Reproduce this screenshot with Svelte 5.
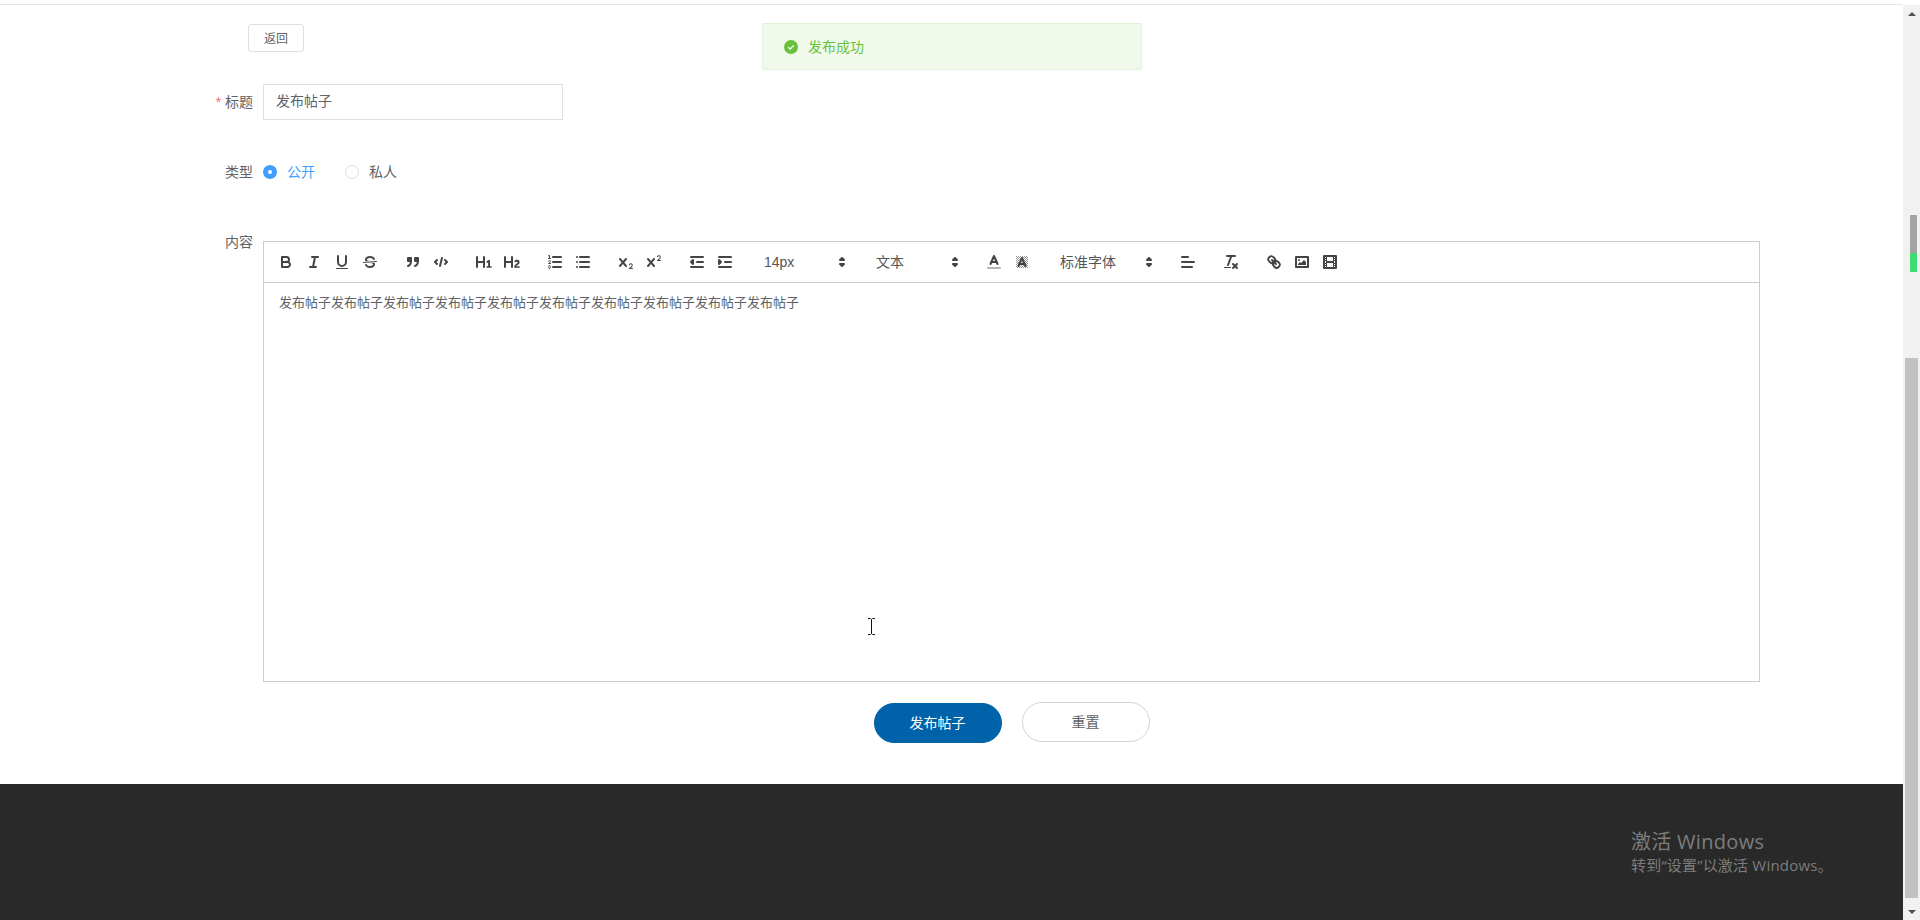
<script lang="ts">
  let title = $state('发布帖子');
  let kind = $state('public');
  const body = '发布帖子'.repeat(10);
  const dots: number[][] = [];
  for (let y = 3; y < 15; y++) {
    for (let x = 3; x < 15; x++) {
      if ((x + y) % 2 === 0) dots.push([x, y]);
    }
  }
</script>

{#snippet arrows()}
  <svg class="arrows" viewBox="0 0 18 18" aria-hidden="true">
    <polygon class="s f" points="7 11 9 13 11 11 7 11" />
    <polygon class="s f" points="7 7 9 5 11 7 7 7" />
  </svg>
{/snippet}

<div class="page">
  <div class="main">
    <div class="topline"></div>

    <form class="form">
      <button class="back" type="button"><span class="lift">返回</span></button>

      <div class="row">
        <span class="label"><i>*</i> 标题</span>
        <input class="title" bind:value={title} />
      </div>

      <div class="row">
        <span class="label">类型</span>
        <div class="radios">
          <button type="button" class="radio" class:on={kind === 'public'} onclick={() => (kind = 'public')}>
            <span class="dot"></span>公开
          </button>
          <button type="button" class="radio" class:on={kind === 'private'} onclick={() => (kind = 'private')}>
            <span class="dot"></span>私人
          </button>
        </div>
      </div>

      <div class="row content">
        <span class="label">内容</span>
        <div class="col">
          <div class="editor">
            <div class="toolbar">
              <div class="group">
                <span class="ic"><svg viewBox="0 0 18 18"><path class="s" d="M5,4H9.5A2.5,2.5,0,0,1,12,6.5v0A2.5,2.5,0,0,1,9.5,9H5A0,0,0,0,1,5,9V4A0,0,0,0,1,5,4Z" /><path class="s" d="M5,9h5.5A2.5,2.5,0,0,1,13,11.5v0A2.5,2.5,0,0,1,10.5,14H5a0,0,0,0,1,0,0V9A0,0,0,0,1,5,9Z" /></svg></span>
                <span class="ic"><svg viewBox="0 0 18 18"><line class="s" x1="7" x2="13" y1="4" y2="4" /><line class="s" x1="5" x2="11" y1="14" y2="14" /><line class="s" x1="8" x2="10" y1="14" y2="4" /></svg></span>
                <span class="ic"><svg viewBox="0 0 18 18"><path class="s" d="M5,3V9a4.012,4.012,0,0,0,4,4H9a4.012,4.012,0,0,0,4-4V3" /><rect class="f" height="1" rx="0.5" ry="0.5" width="12" x="3" y="15" /></svg></span>
                <span class="ic"><svg viewBox="0 0 18 18"><line class="s t" x1="15.5" x2="2.5" y1="8.5" y2="9.5" /><path class="f" d="M9.007,8C6.542,7.791,6,7.519,6,6.5,6,5.792,7.283,5,9,5c1.571,0,2.765.679,2.969,1.309a1,1,0,0,0,1.9-.617C13.356,4.106,11.354,3,9,3,6.2,3,4,4.538,4,6.5a3.2,3.2,0,0,0,.5,1.843Z" /><path class="f" d="M8.984,10C11.457,10.208,12,10.479,12,11.5c0,.708-1.283,1.5-3,1.5-1.571,0-2.765-.679-2.969-1.309a1,1,0,1,0-1.9.617C4.644,13.894,6.646,15,9,15c2.8,0,5-1.538,5-3.5a3.2,3.2,0,0,0-.5-1.843Z" /></svg></span>
              </div>
              <div class="group">
                <span class="ic"><svg viewBox="0 0 18 18"><rect class="s f" height="3" width="3" x="4" y="5" /><rect class="s f" height="3" width="3" x="11" y="5" /><path class="s" d="M7,8c0,4.031-3,5-3,5" /><path class="s" d="M14,8c0,4.031-3,5-3,5" /></svg></span>
                <span class="ic"><svg viewBox="0 0 18 18"><polyline class="s" points="5 7 3 9 5 11" /><polyline class="s" points="13 7 15 9 13 11" /><line class="s" x1="10" x2="8" y1="5" y2="13" /></svg></span>
              </div>
              <div class="group">
                <span class="ic"><svg viewBox="0 0 18 18"><path class="f" d="M10,4V14a1,1,0,0,1-2,0V10H3v4a1,1,0,0,1-2,0V4A1,1,0,0,1,3,4V8H8V4a1,1,0,0,1,2,0Zm6.06787,9.209H14.98975V7.59863a.54085.54085,0,0,0-.605-.60547h-.62744a1.01119,1.01119,0,0,0-.748.29688L11.645,8.56641a.5435.5435,0,0,0-.022.8584l.28613.30762a.53861.53861,0,0,0,.84717.0332l.09912-.08789a1.2137,1.2137,0,0,0,.2417-.35254h.02246s-.01123.30859-.01123.60547V13.209H12.041a.54085.54085,0,0,0-.605.60547v.43945a.54085.54085,0,0,0,.605.60547h4.02686a.54085.54085,0,0,0,.605-.60547v-.43945A.54085.54085,0,0,0,16.06787,13.209Z" /></svg></span>
                <span class="ic"><svg viewBox="0 0 18 18"><path class="f" d="M16.73975,13.81445v.43945a.54085.54085,0,0,1-.605.60547H11.855a.58392.58392,0,0,1-.64893-.60547V14.0127c0-2.90527,3.39941-3.42187,3.39941-4.55469a.77675.77675,0,0,0-.84717-.78125,1.17684,1.17684,0,0,0-.83594.38477c-.2749.26367-.561.374-.85791.13184l-.4292-.34082c-.30811-.24219-.38525-.51758-.1543-.81445a2.97155,2.97155,0,0,1,2.45361-1.17676,2.45393,2.45393,0,0,1,2.68408,2.40918c0,2.45312-3.1792,2.92676-3.27832,3.93848h2.79443A.54085.54085,0,0,1,16.73975,13.81445ZM9,3A.99974.99974,0,0,0,8,4V8H3V4A1,1,0,0,0,1,4V14a1,1,0,0,0,2,0V10H8v4a1,1,0,0,0,2,0V4A.99974.99974,0,0,0,9,3Z" /></svg></span>
              </div>
              <div class="group">
                <span class="ic"><svg viewBox="0 0 18 18"><line class="s" x1="7" x2="15" y1="4" y2="4" /><line class="s" x1="7" x2="15" y1="9" y2="9" /><line class="s" x1="7" x2="15" y1="14" y2="14" /><line class="s t" x1="2.5" x2="4.5" y1="5.5" y2="5.5" /><path class="f" d="M3.5,6A0.5,0.5,0,0,1,3,5.5V3.085l-0.276.138A0.5,0.5,0,0,1,2.053,3c-0.124-.247-0.023-0.324.224-0.447l1-.5A0.5,0.5,0,0,1,4,2.5v3A0.5,0.5,0,0,1,3.5,6Z" /><path class="s t" d="M4.5,10.5h-2c0-.234,1.85-1.076,1.85-2.234A0.959,0.959,0,0,0,2.5,8.156" /><path class="s t" d="M2.5,14.846a0.959,0.959,0,0,0,1.85-.109A0.7,0.7,0,0,0,3.75,14a0.688,0.688,0,0,0,.6-0.736,0.959,0.959,0,0,0-1.85-.109" /></svg></span>
                <span class="ic"><svg viewBox="0 0 18 18"><line class="s" x1="6" x2="15" y1="4" y2="4" /><line class="s" x1="6" x2="15" y1="9" y2="9" /><line class="s" x1="6" x2="15" y1="14" y2="14" /><line class="s" x1="3" x2="3" y1="4" y2="4" /><line class="s" x1="3" x2="3" y1="9" y2="9" /><line class="s" x1="3" x2="3" y1="14" y2="14" /></svg></span>
              </div>
              <div class="group">
                <span class="ic"><svg viewBox="0 0 18 18"><path class="f" d="M15.5,15H13.861a3.858,3.858,0,0,0,1.914-2.975,1.8,1.8,0,0,0-1.6-1.751A1.921,1.921,0,0,0,12.021,11.7a0.50013,0.50013,0,1,0,.957.291h0a0.914,0.914,0,0,1,1.053-.725,0.81,0.81,0,0,1,.744.762c0,1.076-1.16971,1.86982-1.93971,2.43082A1.45639,1.45639,0,0,0,12,15.5a0.5,0.5,0,0,0,.5.5h3A0.5,0.5,0,0,0,15.5,15Z" /><path class="f" d="M9.65,5.241a1,1,0,0,0-1.409.108L6,7.964,3.759,5.349A1,1,0,0,0,2.192,6.59178Q2.2,6.6,2.241,6.651L4.684,9.5,2.241,12.35A1,1,0,0,0,3.71,13.70722q0.04882-.04.09-0.08752L6,11.036,8.241,13.65a1,1,0,1,0,1.567-1.24277Q9.8,12.4,9.759,12.35L7.316,9.5,9.759,6.651A1,1,0,0,0,9.65,5.241Z" /></svg></span>
                <span class="ic"><svg viewBox="0 0 18 18"><path class="f" d="M15.5,7H13.861a4.015,4.015,0,0,0,1.914-2.975,1.8,1.8,0,0,0-1.6-1.751A1.922,1.922,0,0,0,12.021,3.7a0.5,0.5,0,1,0,.957.291,0.917,0.917,0,0,1,1.053-.725,0.81,0.81,0,0,1,.744.762c0,1.077-1.164,1.925-1.934,2.486A1.423,1.423,0,0,0,12,7.5a0.5,0.5,0,0,0,.5.5h3A0.5,0.5,0,0,0,15.5,7Z" /><path class="f" d="M9.651,5.241a1,1,0,0,0-1.41.108L6,7.964,3.759,5.349a1,1,0,1,0-1.519,1.3L4.683,9.5,2.241,12.35a1,1,0,1,0,1.519,1.3L6,11.036,8.241,13.65a1,1,0,0,0,1.519-1.3L7.317,9.5,9.759,6.651A1,1,0,0,0,9.651,5.241Z" /></svg></span>
              </div>
              <div class="group">
                <span class="ic"><svg viewBox="0 0 18 18"><line class="s" x1="3" x2="15" y1="14" y2="14" /><line class="s" x1="3" x2="15" y1="4" y2="4" /><line class="s" x1="9" x2="15" y1="9" y2="9" /><polyline class="s f" points="5 7 5 11 3 9 5 7" /></svg></span>
                <span class="ic"><svg viewBox="0 0 18 18"><line class="s" x1="3" x2="15" y1="14" y2="14" /><line class="s" x1="3" x2="15" y1="4" y2="4" /><line class="s" x1="9" x2="15" y1="9" y2="9" /><polyline class="s f" points="3 7 3 11 5 9 3 7" /></svg></span>
              </div>
              <div class="picker num">14px{@render arrows()}</div>
              <div class="picker">文本{@render arrows()}</div>
              <div class="group">
                <span class="ic"><svg viewBox="0 0 18 18"><line class="s faint" x1="3" x2="15" y1="15" y2="15" /><polyline class="s" points="5.5 11 9 3 12.5 11" /><line class="s" x1="11.63" x2="6.38" y1="9" y2="9" /></svg></span>
                <span class="ic"><svg viewBox="0 0 18 18"><g class="hatch">{#each dots as d}<rect class="f" x={d[0]} y={d[1]} width="1" height="1" />{/each}</g><polyline class="s" points="5.5 13 9 5 12.5 13" /><line class="s" x1="11.63" x2="6.38" y1="11" y2="11" /></svg></span>
              </div>
              <div class="picker wide">标准字体{@render arrows()}</div>
              <div class="group">
                <span class="ic"><svg viewBox="0 0 18 18"><line class="s" x1="3" x2="15" y1="9" y2="9" /><line class="s" x1="3" x2="13" y1="14" y2="14" /><line class="s" x1="3" x2="9" y1="4" y2="4" /></svg></span>
              </div>
              <div class="group">
                <span class="ic"><svg viewBox="0 0 18 18"><line class="s" x1="5" x2="13" y1="3" y2="3" /><line class="s" x1="6" x2="9.35" y1="12" y2="3" /><line class="s" x1="11" x2="15" y1="11" y2="15" /><line class="s" x1="15" x2="11" y1="11" y2="15" /><rect class="f" height="1" rx="0.5" ry="0.5" width="7" x="2" y="14" /></svg></span>
              </div>
              <div class="group">
                <span class="ic"><svg viewBox="0 0 18 18"><line class="s" x1="7" x2="11" y1="7" y2="11" /><path class="s" d="M8.9,4.577a3.476,3.476,0,0,1,.36,4.679A3.476,3.476,0,0,1,4.577,8.9C3.185,7.5,2.035,6.4,4.217,4.217S7.5,3.185,8.9,4.577Z" /><path class="s" d="M13.423,9.1a3.476,3.476,0,0,0-4.679-.36,3.476,3.476,0,0,0,.36,4.679c1.392,1.392,2.5,2.542,4.679.36S14.815,10.5,13.423,9.1Z" /></svg></span>
                <span class="ic"><svg viewBox="0 0 18 18"><rect class="s" height="10" width="12" x="3" y="4" /><circle class="f" cx="6" cy="7" r="1" /><polyline class="f" points="5 12 5 11 7 9 8 10 11 7 13 9 13 12 5 12" /></svg></span>
                <span class="ic"><svg viewBox="0 0 18 18"><rect class="s" height="12" width="12" x="3" y="3" /><rect class="f" height="12" width="1" x="5" y="3" /><rect class="f" height="12" width="1" x="12" y="3" /><rect class="f" height="2" width="8" x="5" y="8" /><rect class="f" height="1" width="3" x="3" y="5" /><rect class="f" height="1" width="3" x="3" y="7" /><rect class="f" height="1" width="3" x="3" y="10" /><rect class="f" height="1" width="3" x="3" y="12" /><rect class="f" height="1" width="3" x="12" y="5" /><rect class="f" height="1" width="3" x="12" y="7" /><rect class="f" height="1" width="3" x="12" y="10" /><rect class="f" height="1" width="3" x="12" y="12" /></svg></span>
              </div>
            </div>
            <div class="text">{body}</div>
          </div>

          <div class="actions">
            <button class="pill primary" type="button">发布帖子</button>
            <button class="pill plain" type="button">重置</button>
          </div>
        </div>
      </div>
    </form>

    <footer class="footer">
      <div class="activate">
        <div class="a1">激活 Windows</div>
        <div class="a2">转到“设置”以激活 Windows。</div>
      </div>
    </footer>
  </div>

  <aside class="scrollbar">
    <div class="sb-btn"><span class="up"></span></div>
    <div class="sb-track"><div class="sb-thumb"></div></div>
    <div class="sb-btn"><span class="down"></span></div>
    <div class="meter"></div>
  </aside>

  <div class="toast">
    <svg viewBox="0 0 16 16" width="16" height="16" aria-hidden="true">
      <circle cx="8" cy="8" r="7" fill="#67c23a" />
      <polyline points="5.2 8.2 7.2 10 10.800 6.400" fill="none" stroke="#fff" stroke-width="1.3" />
    </svg>
    <span class="lift">发布成功</span>
  </div>

  <svg class="cursor" viewBox="0 0 9 17" width="9" height="17" aria-hidden="true">
    <path d="M1 .5h2.500L4.500 1.500 5.500 .5H8M4.500 1.500v14M1 16.500h2.500l1-1 1 1H8" fill="none" stroke="#111" stroke-width="1" />
  </svg>
</div>

<style>
  :global(body) {
    margin: 0;
    background: #fff;
  }

  .page {
    position: relative;
    display: flex;
    height: 920px;
    overflow: hidden;
    color: #606266;
    font-family: "Liberation Sans", "Noto Sans CJK SC", sans-serif;
    font-size: 14px;
  }

  .main {
    flex: 1;
    min-width: 0;
    display: flex;
    flex-direction: column;
  }

  .topline {
    height: 4px;
    border-bottom: 1px solid #e4e4e4;
  }

  .form {
    flex: 1;
    padding: 19px 143px 0 200px;
  }

  button,
  input {
    font: inherit;
    color: inherit;
  }

  .lift {
    display: block;
    padding-bottom: 2px;
  }

  .back {
    display: block;
    width: 56px;
    height: 28px;
    margin-left: 48px;
    padding: 0;
    background: #fff;
    border: 1px solid #dcdfe6;
    border-radius: 3px;
    font-size: 12px;
    cursor: pointer;
  }

  .row {
    display: flex;
    margin-top: 32px;
    height: 36px;
    line-height: 36px;
  }

  .row + .row {
    margin-top: 34px;
  }

  .label {
    flex: 0 0 53px;
    margin-right: 10px;
    text-align: right;
    white-space: nowrap;
  }

  .label i {
    color: #f56c6c;
    font-style: normal;
  }

  .title {
    box-sizing: border-box;
    width: 300px;
    height: 36px;
    padding: 0 12px 2px;
    border: 1px solid #dcdfe6;
    outline: none;
  }

  .radios {
    display: flex;
    gap: 30px;
  }

  .radio {
    display: flex;
    align-items: center;
    gap: 10px;
    padding: 0;
    background: none;
    border: 0;
    cursor: pointer;
  }

  .dot {
    box-sizing: border-box;
    width: 14px;
    height: 14px;
    border: 1px solid #dcdfe6;
    border-radius: 50%;
    background: #fff;
  }

  .radio.on {
    color: #409eff;
  }

  .radio.on .dot {
    border: 5px solid #409eff;
  }

  .col {
    flex: 1;
    min-width: 0;
    padding-top: 17px;
  }

  .editor {
    box-sizing: border-box;
    height: 441px;
    border: 1px solid #ccc;
    line-height: 1.42;
  }

  .toolbar {
    box-sizing: border-box;
    display: flex;
    gap: 15px;
    height: 41px;
    padding: 8px;
    border-bottom: 1px solid #ccc;
    color: #555;
  }

  .group {
    display: flex;
  }

  .ic {
    display: block;
    box-sizing: border-box;
    width: 28px;
    height: 24px;
    padding: 3px 5px;
  }

  .ic svg {
    display: block;
    width: 18px;
    height: 18px;
  }

  .s {
    fill: none;
    stroke: #444;
    stroke-width: 2;
    stroke-linecap: round;
    stroke-linejoin: round;
  }

  .f {
    fill: #444;
  }

  .s.f {
    fill: #444;
  }

  .t {
    stroke-width: 1;
  }

  .faint {
    opacity: 0.4;
  }

  .hatch {
    opacity: 0.55;
  }

  .picker {
    position: relative;
    box-sizing: border-box;
    width: 98px;
    height: 24px;
    padding-left: 9px;
    font-size: 14px;
    line-height: 24px;
  }

  .picker.num {
    padding-left: 10px;
  }

  .picker.wide {
    width: 108px;
  }

  .arrows {
    position: absolute;
    top: 3px;
    right: 1px;
    width: 18px;
    height: 18px;
  }

  .text {
    padding: 11px 15px;
    font-size: 13px;
  }

  .actions {
    display: flex;
    justify-content: center;
    align-items: flex-start;
    gap: 20px;
    margin-top: 20px;
  }

  .pill {
    box-sizing: border-box;
    width: 128px;
    height: 40px;
    padding: 0;
    border-radius: 20px;
    cursor: pointer;
  }

  .primary {
    margin-top: 1px;
    background: #0062a8;
    border: 1px solid #0062a8;
    color: #fff;
  }

  .plain {
    background: #fff;
    border: 1px solid #d4d4d4;
  }

  .footer {
    position: relative;
    height: 136px;
    background: #292929;
  }

  .activate {
    padding: 44px 0 0 1631px;
    color: #7d7d7d;
    font-family: "Open Sans", "Noto Sans CJK SC", sans-serif;
    white-space: nowrap;
  }

  .a1 {
    font-size: 20px;
    line-height: 27px;
    letter-spacing: 0.3px;
  }

  .a2 {
    font-size: 15px;
    line-height: 20px;
    letter-spacing: 0.2px;
  }

  .scrollbar {
    position: relative;
    display: flex;
    flex-direction: column;
    flex: 0 0 17px;
    margin-top: 5px;
    background: #f1f1f1;
  }

  .sb-btn {
    flex: 0 0 17px;
    display: grid;
    place-items: center;
  }

  .up,
  .down {
    width: 0;
    height: 0;
    border-left: 4px solid transparent;
    border-right: 4px solid transparent;
  }

  .up {
    border-bottom: 4px solid #505050;
  }

  .down {
    border-top: 4px solid #505050;
  }

  .sb-track {
    flex: 1;
    padding: 336px 2px 0;
  }

  .sb-thumb {
    height: 540px;
    background: #c1c1c1;
  }

  .meter {
    position: absolute;
    top: 210px;
    left: 7px;
    width: 7px;
    height: 57px;
    border-radius: 1px;
    background: linear-gradient(#a3a3a3 0 66%, #3ddc72 66% 100%);
  }

  .toast {
    position: absolute;
    top: 23px;
    left: 762px;
    box-sizing: border-box;
    width: 380px;
    height: 47px;
    display: flex;
    align-items: center;
    gap: 9px;
    padding-left: 20px;
    background: #f0f9eb;
    border: 1px solid #e1f3d8;
    color: #67c23a;
  }

  .cursor {
    position: absolute;
    top: 618px;
    left: 867px;
  }
</style>
